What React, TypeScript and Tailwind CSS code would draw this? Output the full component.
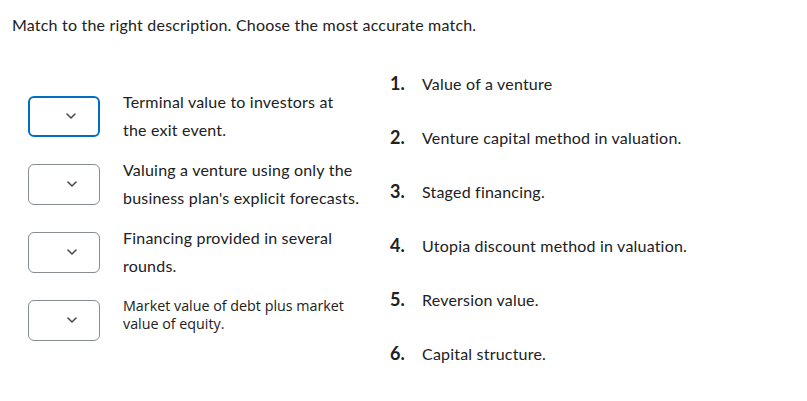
import React from 'react';

const rows = [
  { text: 'Terminal value to investors at the exit event.', active: true },
  { text: "Valuing a venture using only the business plan's explicit forecasts." },
  { text: 'Financing provided in several rounds.' },
  { text: 'Market value of debt plus market value of equity.', alt: true },
];

const choices = [
  'Value of a venture',
  'Venture capital method in valuation.',
  'Staged financing.',
  'Utopia discount method in valuation.',
  'Reversion value.',
  'Capital structure.',
];

const Chevron = () => (
  <svg width="10" height="6" viewBox="0 0 10 6" fill="none">
    <path d="M1 1l4 4 4-4" stroke="#494c4e" strokeWidth="1.6" strokeLinecap="round" strokeLinejoin="round" />
  </svg>
);

export default function App() {
  return (
    <div className="w-[807px] h-[401px] bg-white text-[#202122] font-['Lato',sans-serif]">
      <p className="pl-3 pt-[15px] text-[16px] tracking-[0.2px] leading-5">
        Match to the right description. Choose the most accurate match.
      </p>
      <div className="flex pl-7 pt-[36px]">
        <div className="w-[362px] flex flex-col gap-3 pt-[17px]">
          {rows.map((r, i) => (
            <div key={i} className="flex items-center h-[56px]">
              <div
                className={`w-[72px] h-[41px] shrink-0 rounded-md bg-white flex items-center justify-end pr-[22px] ${
                  r.active ? 'border-2 border-[#006fbf]' : 'border border-[#868c8f]'
                }`}
              >
                <Chevron />
              </div>
              {r.alt ? (
                <p className="ml-[23px] w-[238px] font-['Open_Sans',sans-serif] text-[14.3px] leading-[18px] -mt-[10px]">
                  {r.text}
                </p>
              ) : (
                <p className="ml-[23px] w-[238px] text-[16px] tracking-[0.2px] leading-[28px]">{r.text}</p>
              )}
            </div>
          ))}
        </div>
        <ol className="flex flex-col gap-[34px] -mt-[1px]">
          {choices.map((c, i) => (
            <li key={i} className="flex items-baseline h-5">
              <span className="w-8 text-[18px] font-bold text-[#202122]">{i + 1}.</span>
              <span className="text-[16px] tracking-[0.2px]">{c}</span>
            </li>
          ))}
        </ol>
      </div>
    </div>
  );
}
